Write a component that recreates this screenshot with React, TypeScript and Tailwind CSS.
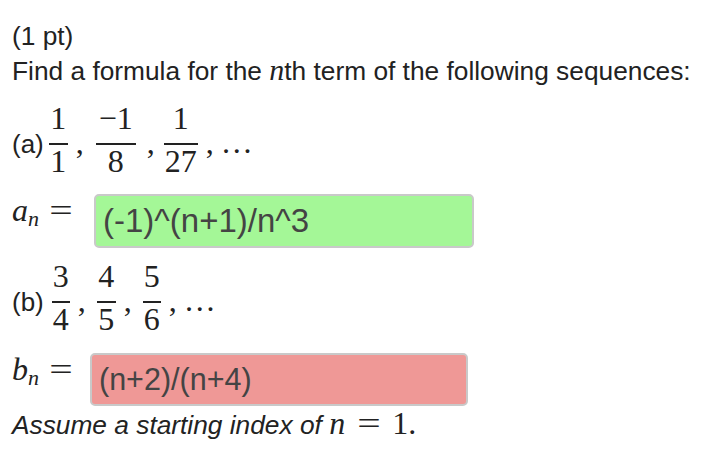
const serif = "font-['Liberation_Serif','Times_New_Roman',serif]";

type FracItem = { num: string; den: string; w: string; ml: string; cm: string };

const Frac = ({ num, den, w }: { num: string; den: string; w: string }) => (
  <div className={`flex flex-col items-center ${w} ${serif} text-[32px]`}>
    <div className="mb-[9px] h-[32px] leading-[32px]">{num}</div>
    <div className="h-[2px] w-full bg-[#222]"></div>
    <div className="h-[32px] leading-[32px]">{den}</div>
  </div>
);

const Eq = ({ cls }: { cls: string }) => (
  <span className={`inline-block scale-x-[1.3] ${cls}`}>=</span>
);

const Sequence = ({ label, fracs, dotsMl }: { label: string; fracs: FracItem[]; dotsMl: string }) => (
  <div className="flex items-start">
    <div className="mt-[29px] text-[26px] leading-[26px]">{label}</div>
    {fracs.map((f, i) => (
      <div key={i} className="flex items-start">
        <div className={f.ml}>
          <Frac num={f.num} den={f.den} w={f.w} />
        </div>
        <div className={`mt-[24px] ${f.cm} ${serif} text-[32px] leading-[32px]`}>,</div>
      </div>
    ))}
    <div className={`mt-[24px] ${dotsMl} ${serif} text-[32px] leading-[32px]`}>…</div>
  </div>
);

const AnswerRow = ({
  letter,
  value,
  bg,
  labelW,
  boxW,
  boxH,
  textSize,
}: {
  letter: string;
  value: string;
  bg: string;
  labelW: string;
  boxW: string;
  boxH: string;
  textSize: string;
}) => (
  <div className="flex items-start">
    <div className={`${labelW} flex items-baseline ${serif} text-[32px] leading-[32px]`}>
      <span className="italic">{letter}</span>
      <span className="relative top-[5px] text-[22px] italic">n</span>
      <Eq cls="ml-[13px]" />
    </div>
    <div
      className={`${boxW} ${boxH} flex items-center rounded-[5px] border-2 border-[#c9c9c9] ${bg} pl-[7px] ${textSize} text-[#444]`}
    >
      {value}
    </div>
  </div>
);

export default function App() {
  return (
    <div className="min-h-screen bg-white pl-[12px] pt-[19px] font-['Liberation_Sans',Arial,sans-serif] text-[26.3px] text-[#222]">
      <div className="leading-[34px]">(1 pt)</div>
      <div className="leading-[34px]">
        Find a formula for the <span className={`${serif} text-[30px] italic`}>n</span>th term of the following
        sequences:
      </div>

      <div className="mt-[14px]">
        <Sequence
          label="(a)"
          fracs={[
            { num: "1", den: "1", w: "w-[19px]", ml: "ml-[5px]", cm: "ml-[8px]" },
            { num: "−1", den: "8", w: "w-[40px]", ml: "ml-[12px]", cm: "ml-[11px]" },
            { num: "1", den: "27", w: "w-[34px]", ml: "ml-[9px]", cm: "ml-[8px]" },
          ]}
          dotsMl="ml-[7px]"
        />
      </div>

      <div className="mt-[17px]">
        <AnswerRow
          letter="a"
          value="(-1)^(n+1)/n^3"
          bg="bg-[#a4f797]"
          labelW="w-[82px]"
          boxW="w-[380px]"
          boxH="h-[54px]"
          textSize="text-[33px]"
        />
      </div>

      <div className="mt-[12px]">
        <Sequence
          label="(b)"
          fracs={[
            { num: "3", den: "4", w: "w-[18px]", ml: "ml-[8px]", cm: "ml-[8px]" },
            { num: "4", den: "5", w: "w-[19px]", ml: "ml-[11px]", cm: "ml-[8px]" },
            { num: "5", den: "6", w: "w-[18px]", ml: "ml-[11px]", cm: "ml-[8px]" },
          ]}
          dotsMl="ml-[7px]"
        />
      </div>

      <div className="mt-[18px]">
        <AnswerRow
          letter="b"
          value="(n+2)/(n+4)"
          bg="bg-[#ef9896]"
          labelW="w-[78px]"
          boxW="w-[378px]"
          boxH="h-[53px]"
          textSize="text-[30.5px]"
        />
      </div>

      <div className="leading-[34px] italic">
        Assume a starting index of{" "}
        <span className={`${serif} text-[32px]`}>
          <span className="italic">n</span>
          <Eq cls="ml-[15px] mr-[14px] not-italic" />
          <span className="not-italic">1.</span>
        </span>
      </div>
    </div>
  );
}
